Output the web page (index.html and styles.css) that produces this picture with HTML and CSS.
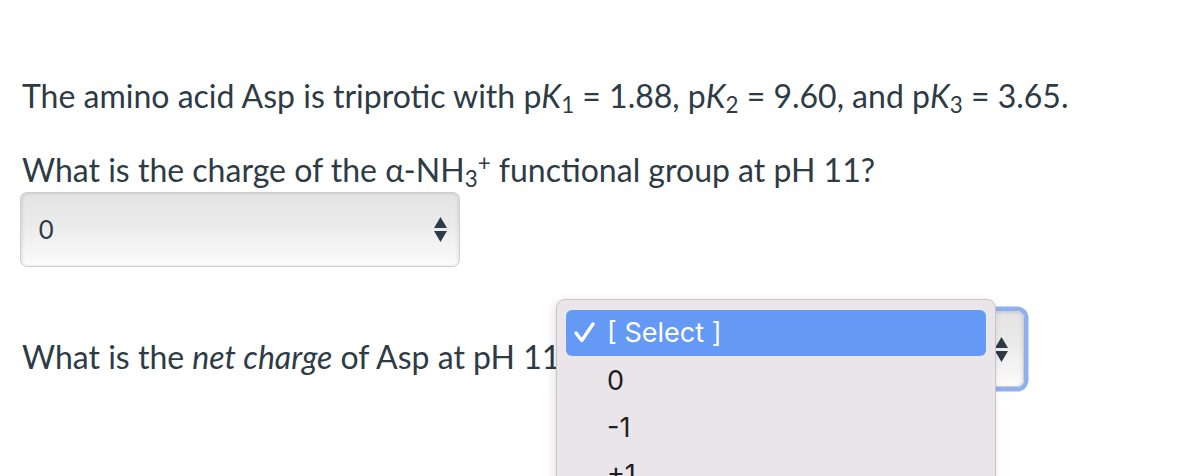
FILE: index.html
```html
<!DOCTYPE html>
<html>
<head>
<meta charset="utf-8">
<link rel="stylesheet" href="styles.css">
</head>
<body>
<div class="question">
  <p class="q-line first">The amino acid Asp is triprotic with p<i>K</i><sub>1</sub> = 1.88, p<i>K</i><sub>2</sub> = 9.60, and p<i>K</i><sub>3</sub> = 3.65.</p>
  <p class="q-line second">What is the charge of the α-NH<sub>3</sub><sup>+</sup> functional group at pH 11?</p>
  <div class="select-row">
    <div class="fake-select">
      <span class="sel-value">0</span>
      <svg class="sel-arrows" width="13" height="25" viewBox="0 0 13 25"><path d="M6.5 0 L13 11 L0 11 Z M0 14 L13 14 L6.5 25 Z" fill="#2d3b45"/></svg>
    </div>
  </div>
  <div class="q-line third">
    <span class="q-text">What is the <i>net charge</i> of Asp at pH 11?</span>
    <div class="fake-select focused">
      <span class="sel-value"></span>
      <svg class="sel-arrows" width="13" height="25" viewBox="0 0 13 25"><path d="M6.5 0 L13 11 L0 11 Z M0 14 L13 14 L6.5 25 Z" fill="#2d3b45"/></svg>
    </div>
  </div>
</div>
<div class="popup">
  <div class="opt selected"><svg class="check" width="21" height="21" viewBox="0 0 21 21"><path d="M2 11 L7.8 18.5 L19 2" fill="none" stroke="#ffffff" stroke-width="3.4" stroke-linecap="round" stroke-linejoin="round"/></svg>[ Select ]</div>
  <div class="opt">0</div>
  <div class="opt">-1</div>
  <div class="opt">+1</div>
</div>
</body>
</html>
```

FILE: styles.css
```css
html, body {
  margin: 0;
  padding: 0;
  background: #ffffff;
  overflow: hidden;
}
body {
  width: 1184px;
  height: 476px;
  position: relative;
  font-family: Lato, "Open Sans", sans-serif;
  color: #2d3b45;
}
.question {
  padding: 76px 0 0 22px;
  font-size: 32px;
}
.q-line {
  margin: 0;
  line-height: 40px;
}
.q-line.second {
  margin-top: 34px;
}
sub, sup {
  font-size: 70%;
  line-height: 0;
}
sub {
  vertical-align: -0.22em;
}
sup {
  vertical-align: 0.5em;
}
.select-row {
  margin-top: 2px;
  margin-left: -2px;
}
.fake-select {
  box-sizing: border-box;
  width: 440px;
  height: 75px;
  border: 1px solid #cbcfd2;
  border-radius: 7px;
  background: linear-gradient(#e4e4e4 0%, #eaeaea 40%, #f3f3f3 72%, #fcfcfc 100%);
  box-shadow: inset 2px 1px 3px rgba(0,0,0,0.07), inset -2px 0 3px rgba(0,0,0,0.06);
  display: flex;
  align-items: center;
  justify-content: space-between;
  padding: 0 12px 0 17px;
}
.sel-value {
  font-family: Inter, "Liberation Sans", sans-serif;
  font-size: 26px;
  color: #2d3b45;
}
.q-line.third {
  margin-top: 44px;
  display: flex;
  align-items: flex-start;
  gap: 9px;
}
.q-text {
  margin-top: 26px;
  white-space: nowrap;
}
.fake-select.focused {
  flex: none;
  height: 76px;
  padding-right: 15px;
  box-shadow: 0 0 0 4.5px #90aff0, inset 2px 1px 3px rgba(0,0,0,0.07), inset -2px 0 3px rgba(0,0,0,0.06);
}
.popup {
  position: absolute;
  left: 556px;
  top: 299px;
  width: 440px;
  height: 200px;
  box-sizing: border-box;
  background: #e9e5e9;
  border: 1px solid #c6c4c6;
  border-radius: 9px;
  padding: 10px 9px;
  box-shadow: -2px 2px 10px rgba(0,0,0,0.12);
  font-family: Inter, "Liberation Sans", sans-serif;
  font-size: 27px;
  color: #1e1e1e;
}
.opt {
  height: 47px;
  line-height: 47px;
  padding-left: 41px;
  border-radius: 6px;
  position: relative;
}
.opt.selected {
  background: #6499f5;
  color: #ffffff;
  height: 46px;
  line-height: 46px;
  margin-bottom: 1px;
}
.check {
  position: absolute;
  left: 8px;
  top: 12px;
}
```
